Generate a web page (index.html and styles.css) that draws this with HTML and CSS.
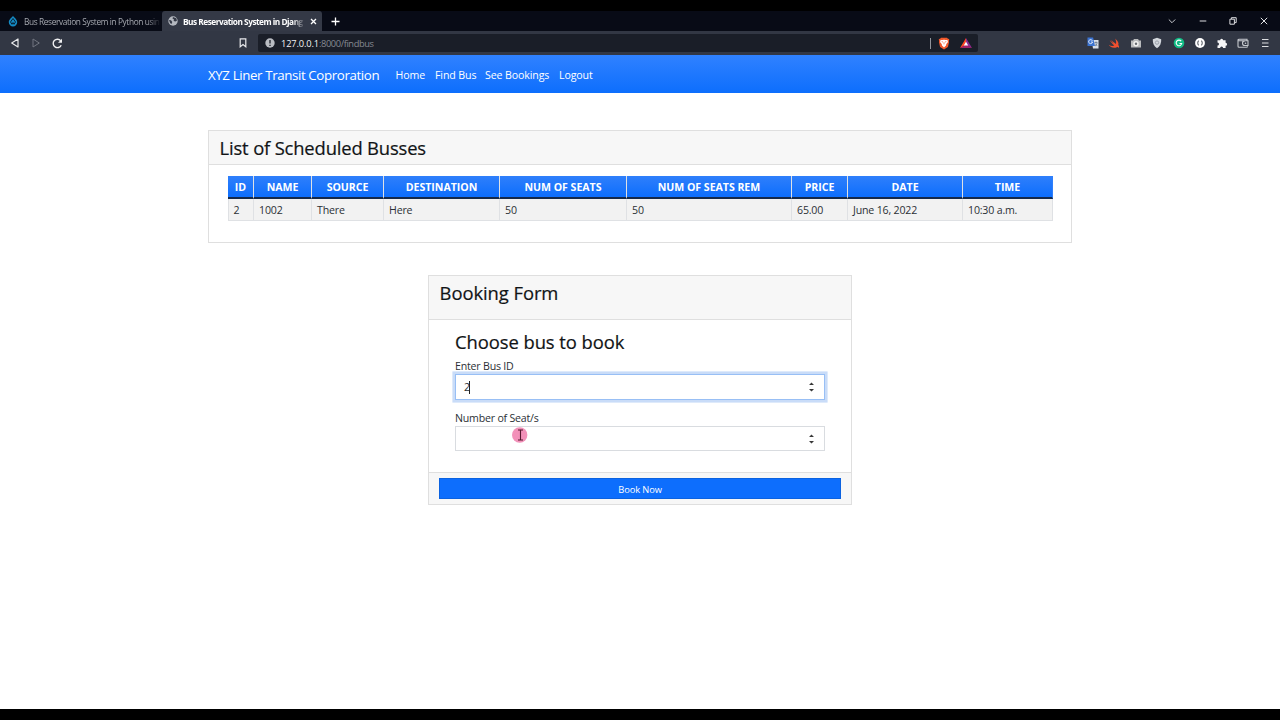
FILE: index.html
```html
<!DOCTYPE html>
<html lang="en">
<head>
    <meta charset="UTF-8">
    <meta name="viewport" content="width=device-width, initial-scale=1.0">
    <title>Bus Reservation System in Django</title>
    <link rel="stylesheet" href="styles.css">
</head>
<body>
    <div class="tab-bar">
        <div class="tab">
            <svg class="tab-icon" width="10" height="12" viewBox="0 0 10 12"><path d="M5 .8C6 2.700 9.200 4.300 9.200 7.300A4.200 4.200 0 0 1 .8 7.300C.8 4.300 4 2.700 5 .8z" fill="#158bc5"/><path d="M5 3.500L2.500 7 4 9.300 5 7.500 6 9.300 7.500 7z" fill="none" stroke="#0a1725" stroke-width=".9"/></svg>
            <span class="tab-title">Bus Reservation System in Python usin</span>
        </div>
        <div class="tab active">
            <svg class="tab-icon" width="10" height="10" viewBox="0 0 10 10"><circle cx="5" cy="5" r="4.700" fill="#b4b8bf"/><path d="M1 4l2 .3L4.300 6 3.500 8 2 7zM5 1l-.5 1.500L6 3.600 5.600 5l2 .5L9 4.500 8.200 2.300z" fill="#343946"/></svg>
            <span class="tab-title">Bus Reservation System in Djang</span>
            <svg class="tab-close" width="7" height="7" viewBox="0 0 7 7"><path d="M1 1l5 5M6 1L1 6" stroke="#fff" stroke-width="1.300"/></svg>
        </div>
        <svg class="new-tab" width="9" height="9" viewBox="0 0 9 9"><path d="M4.500 .5v8M.5 4.500h8" stroke="#fff" stroke-width="1.300"/></svg>
        <div class="window-buttons">
            <svg width="10" height="10" viewBox="0 0 10 10"><path d="M1.800 3.500L5 6.700l3.200-3.200" fill="none" stroke="#c9cbd0"/></svg>
            <svg width="10" height="10" viewBox="0 0 10 10"><path d="M1.700 5h6.600" stroke="#dcdde0"/></svg>
            <svg width="10" height="10" viewBox="0 0 10 10"><path d="M1.900 3.200h4.500v5H1.900zM3.400 3V1.700H8.200v4.900H6.600" fill="none" stroke="#dcdde0"/></svg>
            <svg width="10" height="10" viewBox="0 0 10 10"><path d="M1.800 1.800l6.400 6.400M8.200 1.800L1.800 8.200" stroke="#e3e4e6"/></svg>
        </div>
    </div>

    <div class="toolbar">
        <svg class="back" width="10" height="10" viewBox="0 0 10 10"><path d="M8 1v8L1.700 5z" fill="none" stroke="#e8e9eb" stroke-width="1.200" stroke-linejoin="round"/></svg>
        <svg class="forward" width="10" height="10" viewBox="0 0 10 10"><path d="M2 1v8L8.300 5z" fill="none" stroke="#717580" stroke-linejoin="round"/></svg>
        <svg class="reload" width="11" height="11" viewBox="0 0 11 11"><path d="M9.200 7.200A4.200 4.200 0 1 1 8.700 2.800" fill="none" stroke="#f0f0f2" stroke-width="1.400"/><path d="M10 .8v4H6z" fill="#f0f0f2"/></svg>
        <svg class="bookmark" width="8" height="10" viewBox="0 0 8 10"><path d="M1.200 .8h5.600v8L4 6.600 1.200 8.800z" fill="none" stroke="#e8e9eb" stroke-width="1.200"/></svg>
        <div class="address">
            <svg class="info" width="10" height="10" viewBox="0 0 10 10"><circle cx="5" cy="5" r="4.700" fill="#b9bcc2"/><path d="M5 2v3.600M5 6.800v1.300" stroke="#1b1f28" stroke-width="1.300"/></svg>
            <span class="url"><b>127.0.0.1</b>:8000/findbus</span>
            <span class="divider"></span>
            <svg class="shield" width="12" height="13" viewBox="0 0 12 13"><path d="M3 .7h6l.9 1.100 1.300.2-.3 2.400.2.600-1.200 5L6 12.500 2.100 10 .9 5l.2-.6L.8 2l1.300-.2z" fill="#f1592b"/><path d="M2.600 3l2 .1L6 2.700l1.400.4 2-.1.600 2L8.300 7 8 8.500 6 10.600 4 8.500 3.700 7 2 5z" fill="#fff"/><path d="M3.700 4.600l1.400.5M8.300 4.600l-1.400.5M6 5.300v2" fill="none" stroke="#f1592b" stroke-width=".7"/></svg>
            <svg class="bat" width="12" height="10" viewBox="0 0 12 10"><path d="M6 0L0 10l6-3z" fill="#ff4724"/><path d="M6 0l6 10-6-3z" fill="#8b2b91"/><path d="M0 10h12L6 6.500z" fill="#a32068"/><path d="M6 3.800L3.800 7.500h4.400z" fill="#fff"/></svg>
        </div>
        <div class="extensions">
            <svg width="12" height="12" viewBox="0 0 12 12"><path d="M4.500 3H11.500V11.500H6z" fill="#d9dfe8"/><path d="M.5 .5h5.600L8 9H.5z" fill="#3b73d1"/><path d="M5.400 3.700A2 2 0 1 0 5.600 5H4" fill="none" stroke="#fff" stroke-width=".8"/><path d="M7.500 5.500h3M9 4.500v1M10 6c0 1-1 2.500-2 3M8.200 6.500l2 2.500" fill="none" stroke="#53667c" stroke-width=".7"/></svg>
            <svg width="12" height="12" viewBox="0 0 12 12"><path d="M7 1.500C10 3.700 11 6.400 10.300 8c.8 1 1 2 .6 3-1-1.200-1.700-1-2.500-.6C5.200 11.600 2.200 9.900.8 7.700c2 1.200 4 1.600 5.500.7C4.400 6.900 2.600 4.800 1.700 3.300l4 3.200C4.700 5.300 3.700 4 3 2.800c1.500 1.500 3.200 3 5 4.100.4-1.700 0-3.600-1-5.400z" fill="#f1502f"/></svg>
            <svg width="12" height="12" viewBox="0 0 12 12"><path d="M1 3.500h2L4 2h4l1 1.500h2v7H1z" fill="#b9bbbd"/><circle cx="6" cy="6.700" r="2.700" fill="#f1f1f1"/><circle cx="6" cy="6.700" r="1.200" fill="#656a70"/></svg>
            <svg width="12" height="12" viewBox="0 0 12 12"><path d="M6 .7l4.200 1.500c.1 4-.9 7-4.200 9.100C2.700 9.200 1.700 6.200 1.800 2.200z" fill="#d3d7dd"/><circle cx="6" cy="5.600" r="1.700" fill="none" stroke="#9da3ac"/></svg>
            <svg width="12" height="12" viewBox="0 0 12 12"><circle cx="6" cy="6" r="5.300" fill="#11bc84"/><path d="M8.200 4.200A2.800 2.800 0 1 0 8.700 6.500H6.500" fill="none" stroke="#fff" stroke-width="1.100"/></svg>
            <svg width="12" height="12" viewBox="0 0 12 12"><circle cx="6" cy="6" r="4.900" fill="#fff"/><path d="M4.800 3.700c-1 0-.5 1.700-1.300 2.300.8.600.3 2.300 1.300 2.300M7.200 3.700c1 0 .5 1.700 1.300 2.300-.8.600-.3 2.300-1.300 2.300" fill="none" stroke="#333842"/></svg>
            <svg width="12" height="12" viewBox="0 0 12 12"><path d="M1.500 3.200h2.600a1.500 1.500 0 1 1 3 0h2.500v2.500a1.500 1.500 0 1 1 0 3V11H7.100a1.500 1.500 0 0 0-3 0H1.500V8.500a1.500 1.500 0 0 0 0-3z" fill="#f5f5f6"/></svg>
            <svg width="12" height="12" viewBox="0 0 12 12"><path d="M10 3.600V2.200H2.200Q1 2.200 1 3.400v5.800q0 1 1 1h7.500q1 0 1-1M1.500 3.800H11v4.700H7.800a2.300 2.300 0 0 1 0-4.600" fill="none" stroke="#c5c8cd" stroke-width="1.100"/><circle cx="8.500" cy="6.200" r=".8" fill="#c5c8cd"/></svg>
            <svg width="12" height="12" viewBox="0 0 12 12"><path d="M3 2.500h6.500M3 6h6.500M3 9.500h6.500" stroke="#dcdee1"/></svg>
        </div>
    </div>

    <nav class="navbar">
        <a class="brand">XYZ Liner Transit Coproration</a>
        <a class="nav-link home">Home</a>
        <a class="nav-link find">Find Bus</a>
        <a class="nav-link see">See Bookings</a>
        <a class="nav-link">Logout</a>
    </nav>

    <main>
        <section class="card list-card">
            <div class="card-header"><h2>List of Scheduled Busses</h2></div>
            <table>
                <colgroup>
                    <col class="c-id"><col class="c-name"><col class="c-source"><col class="c-dest"><col class="c-seats"><col class="c-rem"><col class="c-price"><col class="c-date"><col class="c-time">
                </colgroup>
                <thead>
                    <tr><th>ID</th><th>NAME</th><th>SOURCE</th><th>DESTINATION</th><th>NUM OF SEATS</th><th>NUM OF SEATS REM</th><th>PRICE</th><th>DATE</th><th>TIME</th></tr>
                </thead>
                <tbody>
                    <tr><td>2</td><td>1002</td><td>There</td><td>Here</td><td>50</td><td>50</td><td>65.00</td><td>June 16, 2022</td><td>10:30 a.m.</td></tr>
                </tbody>
            </table>
        </section>

        <section class="card form-card">
            <div class="card-header"><h2>Booking Form</h2></div>
            <div class="card-body">
                <h2>Choose bus to book</h2>
                <label class="bus-label">Enter Bus ID</label>
                <div class="field focused">
                    <span>2</span><i class="caret"></i>
                    <svg class="spin" width="7" height="12" viewBox="0 0 7 12"><path d="M1 4L3.500 1.400 6 4zM1 8L3.500 10.600 6 8z" fill="#383838"/></svg>
                </div>
                <label class="seat-label">Number of Seat/s</label>
                <div class="field">
                    <svg class="spin" width="7" height="12" viewBox="0 0 7 12"><path d="M1 4L3.500 1.400 6 4zM1 8L3.500 10.600 6 8z" fill="#383838"/></svg>
                    <svg class="pointer" width="16" height="16" viewBox="0 0 16 16"><circle cx="7.700" cy="8" r="7.700" fill="#f291b9"/><path d="M6 3h2l.500.500.500-.500h2M6 13h2l.500-.500.500.500h2M8.500 3.500v9" fill="none" stroke="#55192f" stroke-width="1.100"/></svg>
                </div>
            </div>
            <div class="card-footer"><button>Book Now</button></div>
        </section>
    </main>
</body>
</html>
```
FILE: styles.css
```css
* {
    box-sizing: border-box;
}
body {
    margin: 0;
    height: 720px;
    overflow: hidden;
    display: flex;
    flex-direction: column;
    background-color: #fff;
    border-top: 11px solid #000;
    border-bottom: 11px solid #000;
    font-family: "Open Sans", "Noto Sans", sans-serif;
    font-size: 10.6px;
    color: #2b3035;
}
svg {
    display: block;
    flex: none;
}

/* browser window */
.tab-bar {
    height: 20px;
    flex: none;
    display: flex;
    align-items: center;
    background-color: #080b16;
}
.tab {
    width: 162px;
    height: 20px;
    display: flex;
    align-items: center;
    padding-left: 8px;
    color: #a7aab1;
}
.tab-title {
    width: 137px;
    margin-left: 6px;
    font-size: 8.300px;
    letter-spacing: -0.38px;
    white-space: nowrap;
    mask-image: linear-gradient(to right, #000 90%, transparent);
}
.active {
    width: 160px;
    padding-left: 6px;
    border-radius: 3px 3px 0 0;
    background-color: #343946;
    color: #fff;
    font-weight: 700;
}
.active .tab-title {
    width: 122px;
    margin-left: 5px;
    letter-spacing: -0.5px;
}
.tab-close {
    margin-left: 5px;
}
.new-tab {
    margin-left: 9px;
}
.window-buttons {
    display: flex;
    gap: 20.600px;
    margin-left: auto;
    margin-right: 11px;
}
.toolbar {
    height: 24px;
    flex: none;
    display: flex;
    align-items: center;
    padding-left: 10px;
    background-color: #323744;
}
.forward {
    margin-left: 11px;
}
.reload {
    margin-left: 11px;
}
.bookmark {
    margin-left: 176px;
}
.address {
    width: 720px;
    height: 18px;
    margin-left: 11px;
    padding-left: 7px;
    display: flex;
    align-items: center;
    border-radius: 2px;
    background-color: #1a1e28;
}
.url {
    margin-left: 6px;
    color: #858991;
    font-size: 9.300px;
    letter-spacing: -0.4px;
}
.url b {
    font-weight: 400;
    color: #f1f1f3;
    letter-spacing: -0.14px;
}
.divider {
    width: 1px;
    height: 11px;
    margin-left: auto;
    background-color: #91949b;
}
.shield {
    margin-left: 7px;
}
.bat {
    margin: 0 6px 0 10px;
}
.extensions {
    display: flex;
    gap: 9.500px;
    margin-left: auto;
    margin-right: 9.500px;
}

/* page */
.navbar {
    height: 38px;
    flex: none;
    display: flex;
    align-items: center;
    padding: 1px 0 0 208px;
    background-image: linear-gradient(#3081ff, #0d6efd);
    color: #fff;
    white-space: nowrap;
}
.brand {
    width: 187.500px;
    font-size: 13.300px;
    letter-spacing: -0.38px;
}
.nav-link {
    letter-spacing: -0.11px;
}
.home {
    width: 39.500px;
}
.find {
    width: 50px;
}
.see {
    width: 74px;
}
main {
    display: flex;
    flex-direction: column;
    align-items: center;
    padding-top: 37px;
}
.card {
    border: 1px solid #dfdfdf;
    background-color: #fff;
}
.card-header {
    height: 34px;
    padding: 4px 10.600px;
    background-color: #f7f7f7;
    border-bottom: 1px solid #dfdfdf;
}
h2 {
    margin: 0;
    font-size: 18.400px;
    line-height: 26px;
    font-weight: 500;
    letter-spacing: -0.16px;
    color: #111416;
    -webkit-text-stroke: 0.2px #111416;
}
.form-card h2 {
    letter-spacing: -0.06px;
}
.list-card {
    width: 864px;
    height: 113px;
}
table {
    width: 825px;
    margin: 11px 0 0 18.500px;
    table-layout: fixed;
    border-collapse: separate;
    border-spacing: 0;
}
.c-id { width: 26px; }
.c-name { width: 58px; }
.c-source { width: 72px; }
.c-dest { width: 116px; }
.c-seats { width: 127px; }
.c-rem { width: 165px; }
.c-price { width: 56px; }
.c-date { width: 115px; }
.c-time { width: 90px; }
th, td {
    padding: 0 5px;
    border-right: 1px solid #dfe1e4;
    white-space: nowrap;
}
th {
    height: 23px;
    padding-left: 6px;
    background-image: linear-gradient(#2f7ffb, #0d6efd);
    border-bottom: 2px solid #15294a;
    color: #fff;
    font-weight: 700;
    letter-spacing: -0.04px;
}
th:last-child {
    border-right-color: #2f7ffb;
}
td {
    height: 22px;
    padding-left: 5.500px;
    background-color: #f2f2f2;
    border-bottom: 1px solid #dfe1e4;
    letter-spacing: -0.18px;
}
td:first-child {
    padding-left: 5px;
    border-left: 1px solid #dfe1e4;
}
.form-card {
    width: 424px;
    height: 230px;
    margin-top: 32px;
}
.form-card .card-header {
    height: 44px;
}
.card-body {
    height: 152px;
    padding: 9px 26px 0;
}
label {
    display: block;
    height: 16px;
    line-height: 16px;
    letter-spacing: -0.2px;
}
.bus-label {
    margin-top: 3px;
}
.seat-label {
    margin-top: 10px;
}
.field {
    position: relative;
    height: 26px;
    display: flex;
    align-items: center;
    padding: 0 9.500px 0 8px;
    border: 1px solid #d9dce0;
}
.seat-label + .field {
    height: 25px;
}
.focused {
    border-color: #98bff5;
    box-shadow: 0 0 0 2.600px #c9dcf8;
}
.caret {
    width: 1px;
    height: 13px;
    margin-left: -1px;
    background-color: #222;
}
.spin {
    margin-left: auto;
}
.pointer {
    position: absolute;
    left: 56px;
    top: 0;
}
.card-footer {
    height: 32px;
    padding: 5px 10px;
    background-color: #f7f7f7;
    border-top: 1px solid #dfdfdf;
}
button {
    display: block;
    width: 100%;
    height: 21px;
    padding: 1px 0 0;
    border: 1px solid #0b62e0;
    background-color: #0d6efd;
    color: #fff;
    font-family: inherit;
    font-size: 9.300px;
    letter-spacing: -0.1px;
}
```
